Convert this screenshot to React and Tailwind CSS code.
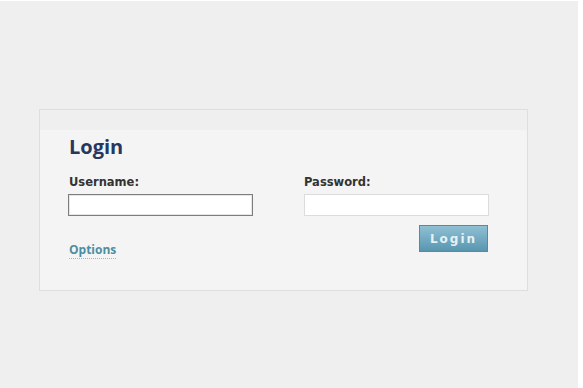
const App = () => {
  return (
    <div className="w-[583px] h-[388px] bg-[#efefef] border-t border-r-[5px] border-white overflow-hidden">
      <div className="ml-[39px] mt-[108px] w-[489px] h-[182px] border border-[#dedede] bg-[#f4f4f4] flex flex-col">
        <div className="h-[20px] bg-[#efefef]"></div>
        <div className="pl-[28px] pr-[38px] pt-[3px]">
          <h1 className="pl-[1px] text-[20px] leading-[28px] font-bold text-[#263760] font-['Open_Sans',sans-serif]">Login</h1>
          <div className="mt-[14px] flex gap-[51px]">
            <div className="w-[185px] flex flex-col">
              <label className="pl-[1px] text-[11.5px] leading-[14px] font-bold text-[#333] font-['DejaVu_Sans',sans-serif]">Username:</label>
              <input type="text" className="mt-[5px] h-[22px] border border-[#7d7d7d] bg-white outline-none shadow-[inset_0_0_0_1px_#e6e6e6]" />
              <div className="mt-[20px] pl-[1px]">
                <a href="#" className="text-[12px] leading-[16px] font-bold text-[#4a8fa3] font-['Open_Sans',sans-serif] border-b border-dotted border-[#9fb8c0]">Options</a>
              </div>
            </div>
            <div className="w-[185px] flex flex-col">
              <label className="text-[11.5px] leading-[14px] font-bold text-[#333] font-['DejaVu_Sans',sans-serif]">Password:</label>
              <input type="password" className="mt-[5px] h-[22px] border border-[#dcdcdc] bg-white outline-none" />
              <div className="mt-[9px] flex justify-end">
                <button className="mr-[1px] w-[69px] h-[27px] border border-[#4f8ca6] bg-gradient-to-b from-[#8fc0d3] to-[#5996b0] text-[#e4f1f5] text-[12px] font-bold tracking-[2px] font-['DejaVu_Sans',sans-serif]">Login</button>
              </div>
            </div>
          </div>
        </div>
      </div>
    </div>
  )
}

export default App
